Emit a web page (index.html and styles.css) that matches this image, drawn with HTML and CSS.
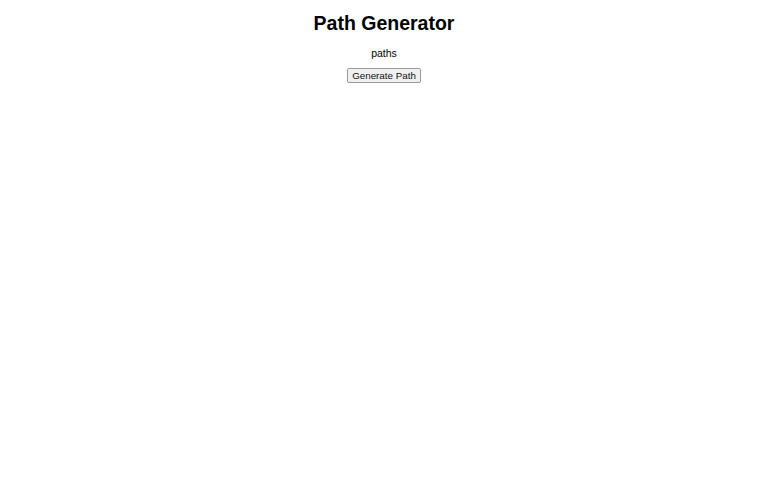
FILE: index.html
```html
<!DOCTYPE html>
<html>
<head>
<meta charset="utf-8">
<link rel="stylesheet" href="styles.css">
</head>
<body>
<div class="app">
  <h1 class="title">Path Generator</h1>
  <div class="paths">paths</div>
  <button class="gen">Generate Path</button>
</div>
</body>
</html>
```
FILE: styles.css
```css
body {
  margin: 0;
  background: #fff;
  font-family: "Liberation Sans", Arial, sans-serif;
  color: #000;
}
.app {
  display: flex;
  flex-direction: column;
  align-items: center;
  padding-top: 12px;
}
.title {
  font-size: 19.5px;
  font-weight: bold;
  margin: 0;
  line-height: 22px;
}
.paths {
  font-size: 10.5px;
  margin-top: 13px;
  line-height: 13px;
}
.gen {
  margin-top: 8px;
  font-family: "Liberation Sans", Arial, sans-serif;
  font-size: 9.8px;
  padding: 1px 4px;
  border: 1px solid #9a9a9a;
  border-radius: 2px;
  background: #f0f0f0;
  color: #111;
  line-height: 11px;
}
```
